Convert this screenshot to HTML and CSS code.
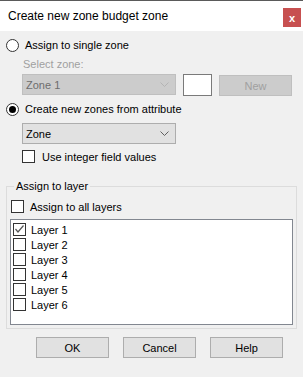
FILE: index.html
```html
<!DOCTYPE html>
<html lang="en">
<head>
    <meta charset="UTF-8">
    <title>Create new zone budget zone</title>
    <link rel="stylesheet" href="styles.css">
</head>
<body>
    <div class="window">
        <div class="titlebar">
            <span class="title">Create new zone budget zone</span>
            <span class="close">x</span>
        </div>
        <div class="content">
            <div class="option first">
                <span class="radio"></span>
                <span>Assign to single zone</span>
            </div>
            <div class="hint">Select zone:</div>
            <div class="zone-row">
                <div class="combo disabled">
                    <span>Zone 1</span>
                    <svg width="9" height="5" viewBox="0 0 9 5"><polyline points="0.5,0.5 4.5,4.5 8.5,0.5" fill="none" stroke="#b4b4b4" stroke-width="1"/></svg>
                </div>
                <div class="swatch"></div>
                <div class="btn disabled new">New</div>
            </div>
            <div class="option second">
                <span class="radio checked"></span>
                <span>Create new zones from attribute</span>
            </div>
            <div class="combo attr">
                <span>Zone</span>
                <svg width="9" height="5" viewBox="0 0 9 5"><polyline points="0.5,0.5 4.5,4.5 8.5,0.5" fill="none" stroke="#606060" stroke-width="1"/></svg>
            </div>
            <div class="check-row integer">
                <span class="box"></span>
                <span>Use integer field values</span>
            </div>

            <fieldset class="group">
                <legend>Assign to layer</legend>
                <div class="check-row all">
                    <span class="box"></span>
                    <span>Assign to all layers</span>
                </div>
                <div class="listbox">
                    <div class="item">
                        <span class="box">
                            <svg width="11" height="11" viewBox="0 0 11 11"><polyline points="1.5,5 4,8 9.5,1.5" fill="none" stroke="#555" stroke-width="1.2"/></svg>
                        </span>
                        <span>Layer 1</span>
                    </div>
                    <div class="item"><span class="box"></span><span>Layer 2</span></div>
                    <div class="item"><span class="box"></span><span>Layer 3</span></div>
                    <div class="item"><span class="box"></span><span>Layer 4</span></div>
                    <div class="item"><span class="box"></span><span>Layer 5</span></div>
                    <div class="item"><span class="box"></span><span>Layer 6</span></div>
                </div>
            </fieldset>

            <div class="buttons">
                <div class="btn">OK</div>
                <div class="btn">Cancel</div>
                <div class="btn">Help</div>
            </div>
        </div>
    </div>
</body>
</html>
```

FILE: styles.css
```css
body {
    margin: 0;
    font-family: "Liberation Sans", Arial, sans-serif;
    font-size: 11px;
    color: #000;
    background-color: #f0f0f0;
}
.window {
    width: 303px;
    height: 377px;
    background-color: #f0f0f0;
    overflow: hidden;
}
.titlebar {
    height: 30px;
    border-top: 1px solid #5a5a5a;
    background-color: #fff;
    display: flex;
    align-items: flex-start;
    justify-content: space-between;
}
.title {
    font-size: 12px;
    margin: 8px 0 0 8px;
}
.close {
    width: 18px;
    height: 19px;
    margin: 7px 2px 0 0;
    background-color: #c75050;
    color: #fff;
    font-weight: bold;
    font-size: 11px;
    display: flex;
    align-items: center;
    justify-content: center;
}
.content {
    display: flex;
    flex-direction: column;
}
.option {
    display: flex;
    align-items: center;
    height: 14px;
    padding-left: 6px;
    gap: 6px;
}
.option.first {
    margin-top: 7px;
}
.option.second {
    margin-top: 6px;
}
.radio {
    width: 11px;
    height: 11px;
    border: 1px solid #333;
    border-radius: 50%;
    background-color: #fff;
    display: flex;
    align-items: center;
    justify-content: center;
}
.radio.checked::after {
    content: "";
    width: 7px;
    height: 7px;
    border-radius: 50%;
    background-color: #000;
}
.hint {
    color: #a0a0a0;
    padding-left: 23px;
    margin-top: 5px;
    line-height: 14px;
}
.zone-row {
    display: flex;
    align-items: flex-start;
    padding-left: 22px;
    margin-top: 3px;
}
.combo {
    box-sizing: border-box;
    width: 154px;
    height: 21px;
    border: 1px solid #adadad;
    background-color: #e1e1e1;
    display: flex;
    align-items: center;
    justify-content: space-between;
    padding: 0 6px 0 3px;
}
.combo.disabled {
    background-color: #cccccc;
    border-color: #bfbfbf;
    color: #6d6d6d;
}
.combo.attr {
    margin: 7px 0 0 22px;
}
.swatch {
    box-sizing: border-box;
    width: 29px;
    height: 22px;
    margin-left: 7px;
    border: 1px solid #7a7a7a;
    background-color: #fff;
}
.btn {
    box-sizing: border-box;
    width: 73px;
    height: 21px;
    border: 1px solid #adadad;
    background-color: #e1e1e1;
    display: flex;
    align-items: center;
    justify-content: center;
}
.btn.disabled {
    background-color: #cccccc;
    border-color: #bfbfbf;
    color: #a0a0a0;
}
.btn.new {
    margin: 1px 0 0 7px;
}
.check-row {
    display: flex;
    align-items: center;
    gap: 7px;
}
.check-row.integer {
    margin: 6px 0 0 22px;
}
.box {
    box-sizing: border-box;
    width: 13px;
    height: 13px;
    border: 1px solid #333;
    background-color: #fff;
    display: flex;
    align-items: center;
    justify-content: center;
}
.group {
    margin: 16px 0 0 6px;
    width: 291px;
    height: 150px;
    box-sizing: border-box;
    border: 1px solid #dcdcdc;
    padding: 0 0 0 3px;
}
.group legend {
    padding: 0 2px;
    margin-left: 4px;
    line-height: 14px;
}
.check-row.all {
    margin: 7px 0 0 1px;
    gap: 6px;
}
.listbox {
    box-sizing: border-box;
    width: 283px;
    height: 106px;
    margin-top: 6px;
    border: 1px solid #828790;
    background-color: #fff;
    padding-top: 2px;
}
.item {
    display: flex;
    align-items: center;
    gap: 5px;
    height: 15px;
    padding-left: 2px;
}
.buttons {
    display: flex;
    gap: 14px;
    padding-left: 36px;
    margin-top: 8px;
}
```
